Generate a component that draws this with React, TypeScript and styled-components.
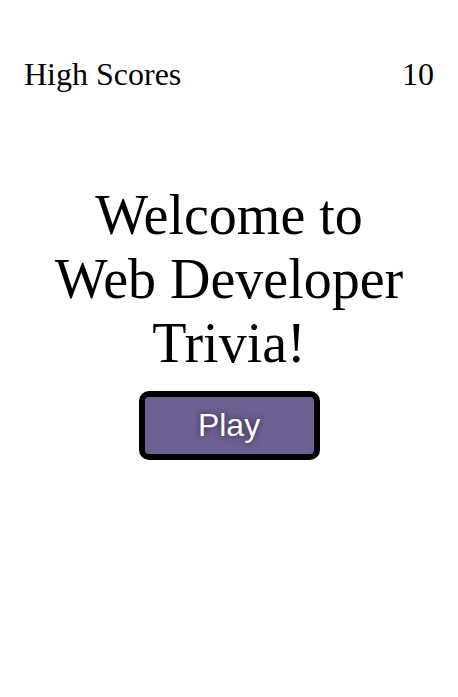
import React from "react";
import styled, { createGlobalStyle } from "styled-components";

const GlobalStyle = createGlobalStyle`
  body {
    margin: 0;
    background: #ffffff;
    font-family: "Liberation Serif", "Times New Roman", serif;
    color: #000000;
  }
`;

const Page = styled.div`
  display: flex;
  flex-direction: column;
  align-items: center;
  min-height: 697px;
`;

const Header = styled.header`
  align-self: stretch;
  display: flex;
  justify-content: space-between;
  align-items: center;
  padding: 56px 24px 0;
  font-size: 32px;
  line-height: 37px;
`;

const Title = styled.h1`
  max-width: 370px;
  margin: 90px 0 16px;
  font-size: 56px;
  font-weight: 400;
  line-height: 64px;
  text-align: center;
`;

const PlayButton = styled.button`
  width: 181px;
  height: 69px;
  border: 6px solid #000000;
  border-radius: 10px;
  background: #6d6093;
  color: #ffffff;
  font-family: "Liberation Sans", Arial, sans-serif;
  font-size: 32px;
  text-shadow: 0 0 6px rgba(0, 0, 0, 0.6);
  cursor: pointer;
`;

export default function App() {
  return (
    <>
      <GlobalStyle />
      <Page>
        <Header>
          <span>High Scores</span>
          <span>10</span>
        </Header>
        <Title>Welcome to Web Developer Trivia!</Title>
        <PlayButton>Play</PlayButton>
      </Page>
    </>
  );
}
